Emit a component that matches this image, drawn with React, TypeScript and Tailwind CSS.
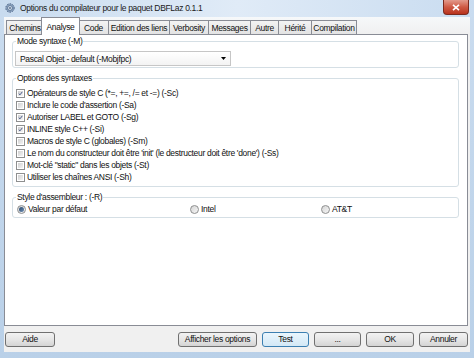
import type { ReactNode } from 'react'

const tabs = [
  { label: 'Chemins', w: 'w-[37px]' },
  { label: 'Analyse', w: 'w-[39px]', active: true },
  { label: 'Code', w: 'w-[30px]' },
  { label: 'Edition des liens', w: 'w-[61px]' },
  { label: 'Verbosity', w: 'w-[39px]' },
  { label: 'Messages', w: 'w-[42px]' },
  { label: 'Autre', w: 'w-[28px]' },
  { label: 'Hérité', w: 'w-[33px]' },
  { label: 'Compilation', w: 'w-[46px]' }
]

const options = [
  { label: 'Opérateurs de style C (*=, +=, /= et -=) (-Sc)', checked: true },
  { label: "Inclure le code d'assertion (-Sa)", checked: false },
  { label: 'Autoriser LABEL et GOTO (-Sg)', checked: true },
  { label: 'INLINE style C++ (-Si)', checked: true },
  { label: 'Macros de style C (globales) (-Sm)', checked: false },
  { label: "Le nom du constructeur doit être 'init' (le destructeur doit être 'done') (-Ss)", checked: false },
  { label: 'Mot-clé "static" dans les objets (-St)', checked: false },
  { label: 'Utiliser les chaînes ANSI (-Sh)', checked: false }
]

function Checkbox({ checked }: { checked: boolean }) {
  return (
    <div className="w-[9px] h-[9px] border border-[#8e8f8f] bg-white p-px shrink-0">
      <div className="w-full h-full bg-gradient-to-br from-[#d0d0d0] to-[#f4f4f4] flex items-center justify-center">
        {checked && (
          <svg width="7" height="7" viewBox="0 0 7 7">
            <path d="M1 3.6 L2.8 5.4 L6 1.2" fill="none" stroke="#33467e" strokeWidth="1.2" />
          </svg>
        )}
      </div>
    </div>
  )
}

function Radio({ checked }: { checked: boolean }) {
  return (
    <div className="w-[9px] h-[9px] rounded-full border border-[#8e8f8f] bg-gradient-to-br from-[#d6d6d6] to-[#f6f6f6] flex items-center justify-center shrink-0">
      {checked && <div className="w-[5px] h-[5px] rounded-full bg-gradient-to-br from-[#2c4a6e] to-[#6d8fb4]" />}
    </div>
  )
}

function Group({ title, className, children }: { title: string; className?: string; children: ReactNode }) {
  return (
    <fieldset className={`border border-[#d5dfe5] rounded-[3px] ${className ?? ''}`}>
      <legend className="ml-[3px] px-px leading-[10px]">{title}</legend>
      {children}
    </fieldset>
  )
}

function Button({ label, w, isDefault }: { label: string; w: string; isDefault?: boolean }) {
  return (
    <div
      className={`${w} h-[15px] rounded-[3px] border flex items-center justify-center ${
        isDefault
          ? 'border-[#3c7fb1] bg-gradient-to-b from-[#eaf6fd] to-[#d3e8f6]'
          : 'border-[#707070] bg-gradient-to-b from-[#f2f2f2] via-[#e6e6e6] to-[#d4d4d4]'
      }`}
    >
      {label}
    </div>
  )
}

export default function App() {
  return (
    <div className="w-[474px] h-[358px] flex flex-col bg-gradient-to-b from-[#cadcef] to-[#b9d0e8] text-[#111] text-[8.5px] leading-[10px] tracking-[-0.32px] font-['Liberation_Sans',Arial,sans-serif]">
      {/* Title bar */}
      <div className="h-[17px] flex items-start bg-gradient-to-r from-[#c8dbef] via-[#e0ebf7] to-[#c9dcf0]">
        <div className="w-[12px] h-[12px] ml-[4px] mt-[2px] flex items-center justify-center">
          <svg width="12" height="12" viewBox="0 0 12 12">
            <circle cx="6" cy="6" r="4.2" fill="#8ea6c4" stroke="#4d6484" strokeWidth="1" strokeDasharray="1.6 1.1" />
            <circle cx="6" cy="6" r="2.4" fill="#dbe6f3" stroke="#4d6484" strokeWidth="0.8" />
            <circle cx="6" cy="6" r="0.9" fill="#4d6484" />
          </svg>
        </div>
        <span className="ml-[4px] mt-[3px] text-[#1a1a1a]">Options du compilateur pour le paquet DBFLaz 0.1.1</span>
        <div className="ml-auto mr-[5px] w-[26px] h-[15px] rounded-b-[4px] border border-t-0 border-[#7b2a1e] bg-gradient-to-b from-[#e29a8c] via-[#cf5a45] to-[#b8321c] flex items-center justify-center">
          <svg width="8" height="7" viewBox="0 0 8 7">
            <path d="M1 0.8 L7 6.2 M7 0.8 L1 6.2" stroke="#ffffff" strokeWidth="1.6" />
          </svg>
        </div>
      </div>

      {/* Client area */}
      <div className="flex-1 mx-[4px] mb-[6px] bg-[#f0f0f0] flex flex-col">
        {/* Tabs */}
        <div className="h-[17px] flex items-end pl-[2px] bg-gradient-to-b from-[#f6f8fa] to-[#f0f0f0]">
          {tabs.map((t) =>
            t.active ? (
              <div
                key={t.label}
                className={`${t.w} h-[18px] -mx-[2px] -mb-px relative z-10 bg-white border border-b-0 border-[#898c95] flex items-center justify-center`}
              >
                {t.label}
              </div>
            ) : (
              <div
                key={t.label}
                className={`${t.w} h-[14px] border border-b-0 border-r-0 last:border-r border-[#898c95] bg-gradient-to-b from-[#f3f3f3] to-[#e3e3e3] flex items-center justify-center`}
              >
                {t.label}
              </div>
            )
          )}
        </div>

        {/* Panel */}
        <div className="h-[292px] mr-[2px] bg-white border border-[#898c95] flex flex-col pl-[7px] pr-[8px] pt-px">
          <Group title="Mode syntaxe (-M)" className="pt-[5px] pb-px">
            <div className="ml-[2px] w-[216px] h-[15px] border border-[#c6c6c6] bg-gradient-to-b from-white to-[#f3f3f3] flex items-center pl-[4px] pr-[4px]">
              <span>Pascal Objet - default (-Mobjfpc)</span>
              <svg className="ml-auto" width="5" height="3" viewBox="0 0 5 3">
                <path d="M0 0 H5 L2.5 3 Z" fill="#000" />
              </svg>
            </div>
          </Group>

          <Group title="Options des syntaxes" className="mt-[5px] pt-[4px] pb-[3px]">
            {options.map((o) => (
              <div key={o.label} className="h-[12px] flex items-center pl-[3px] gap-[2px]">
                <Checkbox checked={o.checked} />
                <span>{o.label}</span>
              </div>
            ))}
          </Group>

          <Group title="Style d'assembleur : (-R)" className="mt-[5px] pt-px pb-[2px]">
            <div className="h-[12px] flex items-center pl-[4px]">
              <div className="w-[173px] flex items-center gap-[2px]">
                <Radio checked />
                <span>Valeur par défaut</span>
              </div>
              <div className="w-[131px] flex items-center gap-[2px]">
                <Radio checked={false} />
                <span>Intel</span>
              </div>
              <div className="flex items-center gap-[2px]">
                <Radio checked={false} />
                <span>AT&amp;T</span>
              </div>
            </div>
          </Group>
        </div>

        {/* Buttons */}
        <div className="flex-1 flex items-center pl-px pr-[2px]">
          <Button label="Aide" w="w-[50px]" />
          <div className="ml-auto flex gap-[5px]">
            <Button label="Afficher les options" w="w-[79px]" />
            <Button label="Test" w="w-[47px]" isDefault />
            <Button label="..." w="w-[47px]" />
            <Button label="OK" w="w-[48px]" />
            <Button label="Annuler" w="w-[49px]" />
          </div>
        </div>
      </div>
    </div>
  )
}
